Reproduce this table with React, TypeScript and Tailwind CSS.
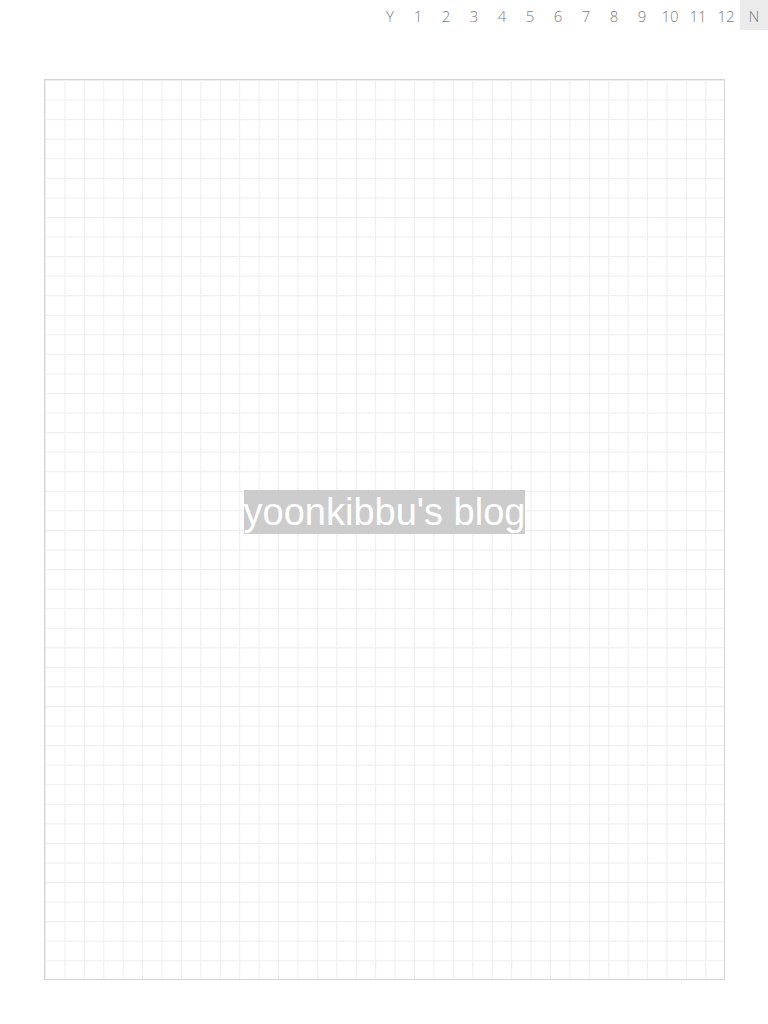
import React from "react";

const items = ["Y", "1", "2", "3", "4", "5", "6", "7", "8", "9", "10", "11", "12", "N"];

export default function App() {
  return (
    <div className="w-[768px] h-[1024px] bg-white overflow-hidden">
      <nav className="flex justify-end h-[30px]">
        {items.map((it) => (
          <div
            key={it}
            className={
              "w-[28px] h-[30px] pt-[3px] flex items-center justify-center text-[15px] font-light text-[#808080] " +
              (it === "N" ? "bg-[#ebebeb]" : "")
            }
            style={{ fontFamily: '"Open Sans", "Noto Sans", sans-serif' }}
          >
            {it}
          </div>
        ))}
      </nav>
      <div className="ml-[44px] mt-[49px] w-[681px] h-[901px] border border-[#d4d4d4] bg-white bg-[linear-gradient(to_right,#ededed_1px,transparent_1px),linear-gradient(to_bottom,#ededed_1px,transparent_1px)] bg-[size:19.4286px_19.5652px] flex items-center justify-center pb-[35px]">
        <span
          className="bg-[#cccccc] text-white text-[38px] leading-[44px]"
          style={{ fontFamily: '"Liberation Sans", Arial, sans-serif' }}
        >
          yoonkibbu's blog
        </span>
      </div>
    </div>
  );
}
